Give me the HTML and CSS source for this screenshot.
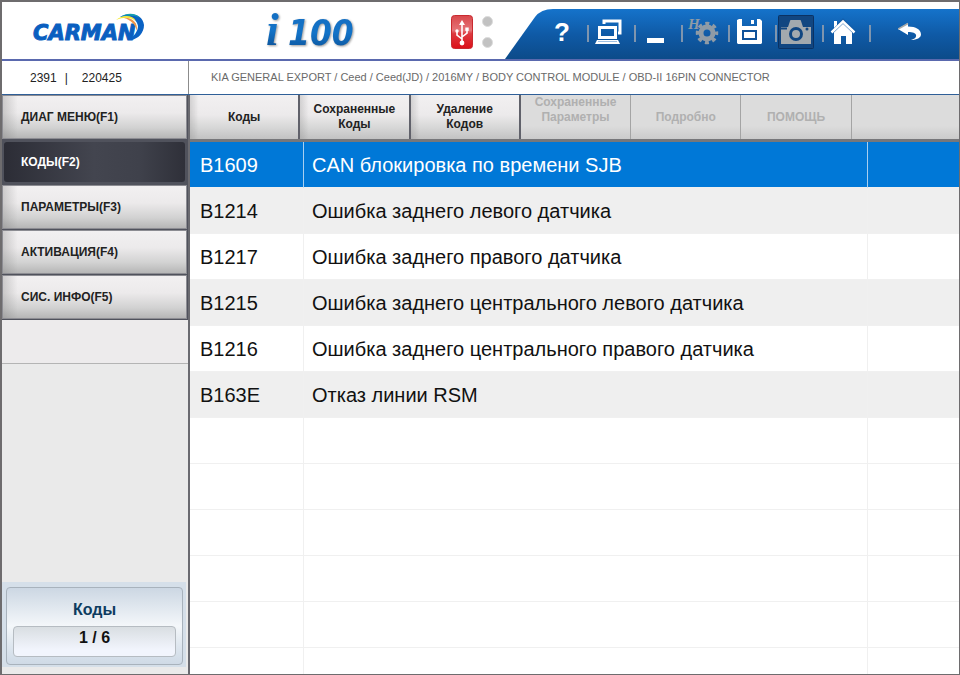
FILE: index.html
```html
<!DOCTYPE html>
<html lang="ru">
<head>
<meta charset="utf-8">
<title>Carman i100</title>
<link rel="stylesheet" href="styles.css">
</head>
<body>
<div class="app">
  <header class="top">
    <div class="brand">
      <span class="brand-name">CARMAN</span>
      <svg class="brand-arc" viewBox="0 0 30 30" aria-hidden="true">
        <path d="M4 4C13-2 27 1 28 12c0 8-6 14-13 15h-3c6-3 10-9 10-14C21 6 13 2 4 4z" fill="#0a62c4"/>
        <path d="M4 4C10 0 19-1 24 5 18 2 11 2 4 4z" fill="#149fae"/>
        <path d="M0 7C7 1 17 2 20 8 14 4 8 4 0 7z" fill="#f4ea35"/>
        <path d="M8 5c7-1 14 4 13 13-2-7-6-11-13-13z" fill="#f0954a"/>
      </svg>
    </div>
    <div class="model"><span class="model-i">i</span><span class="model-n">100</span></div>
    <div class="status">
      <svg class="usb" viewBox="0 0 22 34" role="img" aria-label="USB">
        <defs><linearGradient id="red" x1="0" y1="0" x2="0" y2="1"><stop offset="0" stop-color="#d9474b"/><stop offset=".45" stop-color="#e57478"/><stop offset=".55" stop-color="#dd3a40"/><stop offset="1" stop-color="#dc1018"/></linearGradient></defs>
        <rect x=".5" y=".5" width="21" height="33" rx="3" fill="url(#red)" stroke="#c92a30"/>
        <path d="M11 27V9M11 24l-5-4v-4M11 22l5-4v-4" fill="none" stroke="#fff" stroke-width="1.6"/>
        <path d="M11 5l3 5H8z" fill="#fff"/><circle cx="11" cy="28" r="2.4" fill="#fff"/><circle cx="6" cy="16" r="1.7" fill="#fff"/><rect x="14.300" y="12.500" width="3.400" height="3.400" fill="#fff"/>
      </svg>
      <div class="leds"><i class="led"></i><i class="led"></i></div>
    </div>
    <nav class="tools">
      <button class="tool tool-help" aria-label="Справка">?</button>
      <i class="sep"></i>
      <button class="tool" aria-label="Экраны">
        <svg class="ico" viewBox="0 0 38 34"><path d="M14 9V6h16v12h-2" fill="none" stroke="#fff" stroke-width="3"/><rect x="9.500" y="12.500" width="16" height="10" fill="none" stroke="#fff" stroke-width="3"/><path d="M7 25h21l2 4H5z" fill="#fff"/><path d="M8 26.500h19" stroke="#9fc0e2" stroke-width="1"/></svg>
      </button>
      <i class="sep"></i>
      <button class="tool" aria-label="Свернуть">
        <svg class="ico" viewBox="0 0 38 34"><rect x="10" y="23" width="17" height="5" fill="#fff"/></svg>
      </button>
      <i class="sep"></i>
      <button class="tool" aria-label="Настройки" disabled>
        <svg class="ico" viewBox="0 0 38 34"><text class="gear-h" x="4" y="14">H</text><circle cx="23" cy="18" r="6" fill="none" stroke="#8f9ba6" stroke-width="5"/><circle cx="23" cy="18" r="9.500" fill="none" stroke="#8f9ba6" stroke-width="3.500" stroke-dasharray="4 3.461" stroke-dashoffset="2"/></svg>
      </button>
      <i class="sep"></i>
      <button class="tool" aria-label="Сохранить">
        <svg class="ico" viewBox="0 0 38 34"><path d="M8 4h3v7h15V4h3l2 2v22l-1 1H7l-1-1V5z" fill="#fff"/><rect x="20" y="5" width="3" height="4" fill="#fff"/><rect x="12" y="16" width="13" height="8" fill="none" stroke="#0f529a" stroke-width="2"/></svg>
      </button>
      <i class="sep"></i>
      <button class="tool" aria-label="Снимок экрана">
        <svg class="ico" viewBox="0 0 38 34"><rect x=".5" y=".5" width="35" height="33" rx="1" fill="#114681" stroke="#0b3263"/><path d="M3 12h7l2-6q0-1 1-1h9q1 0 1 1l2 6h8v17H3z" fill="#a3a9ae"/><rect x="3" y="12.500" width="6" height="2" fill="#114681"/><circle cx="29" cy="14" r="1.500" fill="#114681"/><circle cx="18" cy="19" r="5.500" fill="none" stroke="#114681" stroke-width="3"/></svg>
      </button>
      <i class="sep"></i>
      <button class="tool" aria-label="Домой">
        <svg class="ico" viewBox="0 0 38 34"><path d="M9 16l9-8 9 8v13h-6v-8h-5v8H9z" fill="#fff"/><path d="M6 17.500L18 6l12 11.500" fill="none" stroke="#0f5aa8" stroke-width="4"/><path d="M6.500 17.500L18 6.500l11.500 11" fill="none" stroke="#fff" stroke-width="2.500"/><path d="M9 6h3v4l-3 3z" fill="#fff"/></svg>
      </button>
      <i class="sep"></i>
      <button class="tool tool-back" aria-label="Назад">
        <svg class="ico-back" viewBox="0 0 24 34"><path d="M0 14l10-6v3.500c8 0 13 3 13 8 0 3-4 5.500-10 5.500 4-1 5.500-3 5-5-.5-2-3-3-8-3V20z" fill="#fff"/><path d="M0 14l10-5.500" stroke="#a9aaa8" stroke-width="1.500"/></svg>
      </button>
    </nav>
  </header>

  <div class="info">
    <div class="version"><span>2391</span><span>|</span><span class="version-date">220425</span></div>
    <div class="crumbs">KIA GENERAL EXPORT / Ceed / Ceed(JD) / 2016MY / BODY CONTROL MODULE / OBD-II 16PIN CONNECTOR</div>
  </div>

  <div class="body">
    <aside class="side">
      <nav class="menu">
        <button class="item">ДИАГ МЕНЮ(F1)</button>
        <button class="item item-on">КОДЫ(F2)</button>
        <button class="item">ПАРАМЕТРЫ(F3)</button>
        <button class="item">АКТИВАЦИЯ(F4)</button>
        <button class="item">СИС. ИНФО(F5)</button>
      </nav>
      <div class="slot"></div>
      <div class="counter">
        <div class="counter-box">
          <div class="counter-title">Коды</div>
          <div class="counter-value">1 / 6</div>
        </div>
      </div>
    </aside>
    <main class="main">
      <div class="tabs">
        <button class="tab">Коды</button>
        <button class="tab">Сохраненные<br>Коды</button>
        <button class="tab">Удаление<br>Кодов</button>
        <button class="tab tab-raised" disabled>Сохраненные<br>Параметры</button>
        <button class="tab" disabled>Подробно</button>
        <button class="tab" disabled>ПОМОЩЬ</button>
        <div class="tab-fill"></div>
      </div>
      <table class="codes">
        <colgroup><col class="c-code"><col><col class="c-state"></colgroup>
        <tbody>
          <tr class="on"><td>B1609</td><td>CAN блокировка по времени SJB</td><td></td></tr>
          <tr class="odd"><td>B1214</td><td>Ошибка заднего левого датчика</td><td></td></tr>
          <tr><td>B1217</td><td>Ошибка заднего правого датчика</td><td></td></tr>
          <tr class="odd"><td>B1215</td><td>Ошибка заднего центрального левого датчика</td><td></td></tr>
          <tr><td>B1216</td><td>Ошибка заднего центрального правого датчика</td><td></td></tr>
          <tr class="odd"><td>B163E</td><td>Отказ линии RSM</td><td></td></tr>
          <tr><td></td><td></td><td></td></tr>
          <tr><td></td><td></td><td></td></tr>
          <tr><td></td><td></td><td></td></tr>
          <tr><td></td><td></td><td></td></tr>
          <tr><td></td><td></td><td></td></tr>
          <tr class="rest"><td></td><td></td><td></td></tr>
        </tbody>
      </table>
    </main>
  </div>
</div>
</body>
</html>
```
FILE: styles.css
```css
* { box-sizing: border-box; }
body {
  margin: 0;
  font-family: "Liberation Sans", Arial, sans-serif;
  background: #fff;
  color: #111;
}
button {
  margin: 0;
  padding: 0;
  border: 0;
  background: none;
  font: inherit;
  color: inherit;
}
.app {
  min-height: 100vh;
  display: flex;
  flex-direction: column;
  border: 1px solid #6e6c6e;
  border-width: 2px 1px 1px 2px;
}

/* Header */
.top {
  height: 59px;
  display: flex;
  align-items: flex-start;
  border-bottom: 2px solid #5a69ae;
}
.brand {
  display: flex;
  width: 230px;
  padding: 11px 0 0 31px;
}
.brand-name {
  margin-top: 8px;
  font: italic bold 21px/24px "DejaVu Sans", sans-serif;
  color: #0a5fc0;
  -webkit-text-stroke: 1px #0a5fc0;
}
.brand-arc {
  width: 30px;
  height: 30px;
  margin-left: -20px;
}
.model {
  display: flex;
  align-items: baseline;
  width: 218px;
  padding-left: 34px;
  line-height: 56px;
  filter: drop-shadow(1px 1px 1px #9a9a9a);
}
.model-i, .model-n {
  color: transparent;
  background: linear-gradient(#1470c4 30%, #1273c8 50%, #0d559c 80%);
  -webkit-background-clip: text;
  background-clip: text;
}
.model-i {
  width: 22px;
  font: italic bold 46px/56px "Liberation Serif", serif;
}
.model-n {
  font: italic bold 35px/56px "DejaVu Sans Condensed", "DejaVu Sans", sans-serif;
}
.status {
  display: flex;
  gap: 9px;
  padding: 13px 0 0 1px;
}
.usb {
  width: 22px;
  height: 34px;
}
.leds {
  display: flex;
  flex-direction: column;
  gap: 10px;
  padding-top: 1px;
}
.led {
  width: 11px;
  height: 11px;
  border-radius: 50%;
  border: 1px solid #dcdcdc;
  background: #c2c2c2;
}
.tools {
  display: flex;
  align-items: center;
  height: 51px;
  margin: 7px 0 0 auto;
  padding: 0 11px 6px 38px;
  background: linear-gradient(#1573cb, #0f5aa6 50%, #0c4a88);
  clip-path: path("M0 50L30 8Q36 0 48 0H4000V50Z");
}
.tool {
  width: 38px;
  height: 34px;
  color: #fff;
}
.tool-help {
  font: bold 26px/34px "Liberation Sans", Arial, sans-serif;
}
.tool-back {
  width: 76px;
}
.ico, .ico-back {
  display: block;
  width: 38px;
  height: 34px;
}
.ico-back {
  width: 24px;
  margin: 0 auto;
}
.gear-h {
  font: italic bold 15px "Liberation Serif", serif;
  fill: #8f9ba6;
}
.sep {
  width: 2px;
  height: 17px;
  margin: 4px 1px 0 6px;
  background: #7f95ae;
}

/* Version and vehicle path */
.info {
  display: flex;
  height: 34px;
  border-bottom: 1px solid #2f5f98;
  line-height: 32px;
}
.version {
  display: flex;
  gap: 8px;
  width: 187px;
  padding-left: 28px;
  border-right: 1px solid #8c8c8c;
  font-size: 12px;
  line-height: 34px;
  color: #222;
}
.version-date { margin-left: 6px; }
.crumbs {
  flex: 1;
  padding-left: 22px;
  font-size: 11px;
  color: #6a6a6a;
  white-space: nowrap;
}

/* Sidebar */
.body {
  flex: 1;
  display: flex;
}
.side {
  display: flex;
  flex-direction: column;
  width: 188px;
  border-right: 2px solid #6a6a70;
  background: #eaeaea;
}
.menu {
  display: flex;
  flex-direction: column;
  gap: 1px;
  padding: 0 1px 1px 0;
  background: #50525c;
}
.item {
  height: 44px;
  padding-left: 18px;
  border: 1px solid #8c8c92;
  text-align: left;
  font-size: 12px;
  font-weight: bold;
  color: #222;
  background:
    linear-gradient(90deg, rgba(120, 120, 120, .3), rgba(120, 120, 120, 0) 8%),
    linear-gradient(#f2f0f1, #eceaeb 40%, #d2d2d2 75%, #b6b6b6);
}
.item-on {
  border: 2px solid #50525c;
  padding-left: 17px;
  border-radius: 5px;
  color: #fff;
  background: linear-gradient(90deg, #2c2d36, #43454f 50%, #3f414b 75%, #2f3039);
}
.slot {
  height: 44px;
  border-bottom: 1px solid #b4b4b4;
  background: #edebec;
}
.counter {
  margin: auto 2px 7px 0;
  padding: 5px 3px 2px 4px;
  background: #d5dfe9;
}
.counter-box {
  height: 78px;
  padding: 12px 6px 0;
  border: 1px solid #a8b2bc;
  border-radius: 4px;
  text-align: center;
  font: bold 16px/20px "Liberation Sans", Arial, sans-serif;
  background: linear-gradient(#ccd7e3, #f4f7fa 50%, #dfe7ef 75%, #cfdae6);
}
.counter-title { color: #0d3c60; }
.counter-value {
  height: 31px;
  margin-top: 6px;
  padding-top: 1px;
  border: 1px solid #b6bcc2;
  border-radius: 4px;
  background: linear-gradient(#d9dee2, #f2f5fd 80%);
}

/* Tabs */
.main {
  flex: 1;
  min-width: 0;
}
.tabs {
  display: grid;
  grid-template-columns: repeat(6, 110fr) 107fr;
  height: 47px;
  border-bottom: 3px solid #77777a;
  background: #dadada;
}
.tab {
  border-right: 2px solid #60616a;
  font: bold 12px/15px "Liberation Sans", Arial, sans-serif;
  color: #222;
  background:
    linear-gradient(90deg, rgba(120, 120, 120, .25), rgba(120, 120, 120, 0) 8%),
    linear-gradient(#f2f0f1, #eceaeb 45%, #d6d6d6 75%, #c2c2c2);
}
.tab:disabled, .tab-fill {
  border-right: 1px solid #a4a4a4;
  color: #b0b0b0;
  background: linear-gradient(#dcdcdc 70%, #cbcbcb);
}
.tab-raised { padding-bottom: 14px; }
.tab-fill { border-right: 0; }

/* Trouble codes */
.codes {
  width: 100%;
  table-layout: fixed;
  border-collapse: separate;
  border-spacing: 0;
  font-size: 20px;
}
.c-code { width: 114px; }
.c-state { width: 91px; }
.codes td {
  height: 46px;
  padding: 1px 0 0 10px;
  border-right: 1px solid #f0f0f0;
  border-bottom: 1px solid #f0f0f0;
}
.codes td + td { padding-left: 8px; }
.codes td:last-child { border-right: 0; }
.codes .odd td { background: #efefef; }
.codes .on td {
  background: #0078d7;
  color: #fff;
  border-right-color: #a8cff0;
}
.codes .rest td {
  height: 26px;
  border-bottom: 0;
}
```
